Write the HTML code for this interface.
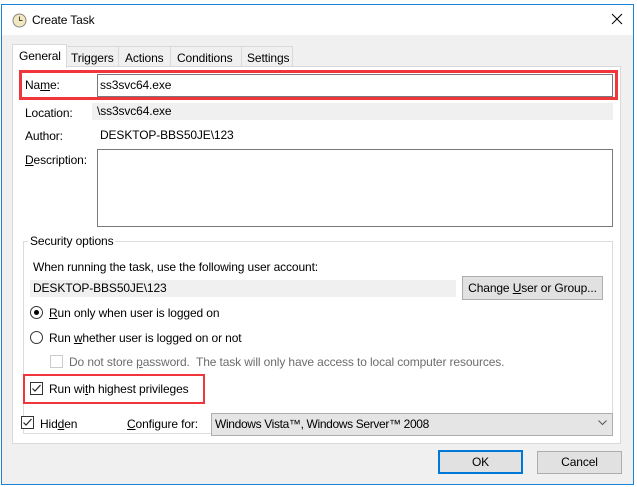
<!DOCTYPE html>
<html><head><style>
*{box-sizing:border-box;margin:0;padding:0}
body{width:637px;height:487px;background:#fff;font-family:"Liberation Sans",sans-serif;font-size:12px;color:#000;position:relative;overflow:hidden;letter-spacing:-0.12px}
.a{position:absolute;white-space:nowrap}
.t{line-height:14px}
u{text-decoration:underline}
.cb{position:absolute;width:13px;height:13px;border:1px solid #333;background:#fff}
.rd{position:absolute;width:13px;height:13px;border:1px solid #333;border-radius:50%;background:#fff}
.btn{position:absolute;background:#e1e1e1;border:1px solid #adadad;text-align:center}
</style></head><body>
<div class="a" style="left:1px;top:4px;width:633px;height:481px;border:1px solid #1883d7;background:#f0f0f0"></div>
<div class="a" style="left:2px;top:5px;width:631px;height:30px;background:#fff"></div>
<svg class="a" style="left:12px;top:13px" width="15" height="15"><circle cx="7.5" cy="7.5" r="6.5" fill="#f3e7c0" stroke="#888"/><path d="M7.5 3.5V7.5H10.5" stroke="#444" fill="none"/></svg>
<div class="a t" style="left:32px;top:13px;font-size:12px">Create Task</div>
<svg class="a" style="left:611px;top:13px" width="12" height="12"><path d="M1 1L11 11M11 1L1 11" stroke="#000" stroke-width="1"/></svg>
<div class="a" style="left:66px;top:46px;width:227px;height:21px;background:#f0f0f0;border:1px solid #d9d9d9;border-bottom:none"></div>
<div class="a" style="left:118px;top:46px;width:1px;height:21px;background:#d9d9d9"></div>
<div class="a" style="left:170px;top:46px;width:1px;height:21px;background:#d9d9d9"></div>
<div class="a" style="left:241px;top:46px;width:1px;height:21px;background:#d9d9d9"></div>
<div class="a" style="left:12px;top:66px;width:609px;height:378px;background:#fff;border:1px solid #d9d9d9"></div>
<div class="a" style="left:12px;top:44px;width:55px;height:24px;background:#fff;border:1px solid #d9d9d9;border-bottom:none"></div>
<div class="a t" style="left:19px;top:49px">General</div>
<div class="a t" style="left:71px;top:51px">Triggers</div>
<div class="a t" style="left:125px;top:51px">Actions</div>
<div class="a t" style="left:177px;top:51px">Conditions</div>
<div class="a t" style="left:247px;top:51px">Settings</div>
<div class="a" style="left:19px;top:70px;width:599px;height:30px;border:3px solid #f0363b"></div>
<div class="a t" style="left:25px;top:78px">Na<u>m</u>e:</div>
<div class="a" style="left:97px;top:74px;width:516px;height:23px;border:1px solid #7a7a7a;background:#fff"></div>
<div class="a t" style="left:100px;top:78px">ss3svc64.exe</div>
<div class="a" style="left:92px;top:103px;width:521px;height:17px;background:#f0f0f0"></div>
<div class="a t" style="left:25px;top:106px">Location:</div>
<div class="a t" style="left:97px;top:104px">\ss3svc64.exe</div>
<div class="a t" style="left:25px;top:129px">Author:</div>
<div class="a t" style="left:100px;top:128px">DESKTOP-BBS50JE\123</div>
<div class="a t" style="left:25px;top:153px"><u>D</u>escription:</div>
<div class="a" style="left:97px;top:149px;width:516px;height:78px;border:1px solid #7a7a7a;background:#fff"></div>
<div class="a" style="left:23px;top:241px;width:590px;height:193px;border:1px solid #dcdcdc"></div>
<div class="a t" style="left:28px;top:234px;background:#fff;padding:0 2px">Security options</div>
<div class="a t" style="left:33px;top:260px">When running the task, use the following user account:</div>
<div class="a" style="left:30px;top:280px;width:426px;height:17px;background:#f0f0f0"></div>
<div class="a t" style="left:33px;top:281px">DESKTOP-BBS50JE\123</div>
<div class="btn" style="left:462px;top:276px;width:141px;height:24px;line-height:22px">Change <u>U</u>ser or Group...</div>
<div class="rd" style="left:30px;top:306px"></div><div class="a" style="left:34px;top:310px;width:5px;height:5px;border-radius:50%;background:#000"></div>
<div class="a t" style="left:49px;top:306px"><u>R</u>un only when user is logged on</div>
<div class="rd" style="left:30px;top:331px"></div>
<div class="a t" style="left:49px;top:331px">Run <u>w</u>hether user is logged on or not</div>
<div class="cb" style="left:50px;top:355px;border-color:#ccc"></div>
<div class="a t" style="left:69px;top:355px;color:#6d6d6d">Do not store <u>p</u>assword.&nbsp; The task will only have access to local computer resources.</div>
<div class="a" style="left:23px;top:374px;width:182px;height:30px;border:2px solid #f0363b"></div>
<div class="cb" style="left:30px;top:382px"></div>
<svg class="a" style="left:30px;top:382px" width="13" height="13"><path d="M2.5 6.5L5 9L10.5 3" stroke="#222" fill="none" stroke-width="1.2"/></svg>
<div class="a t" style="left:49px;top:382px">Run wi<u>t</u>h highest privileges</div>
<div class="cb" style="left:21px;top:416px"></div>
<svg class="a" style="left:21px;top:416px" width="13" height="13"><path d="M2.5 6.5L5 9L10.5 3" stroke="#222" fill="none" stroke-width="1.2"/></svg>
<div class="a t" style="left:40px;top:417px">Hid<u>d</u>en</div>
<div class="a t" style="left:127px;top:417px"><u>C</u>onfigure for:</div>
<div class="a" style="left:211px;top:413px;width:402px;height:23px;background:#e5e5e5;border:1px solid #adadad"></div>
<div class="a t" style="left:215px;top:417px;letter-spacing:-0.35px">Windows Vista™, Windows Server™ 2008</div>
<svg class="a" style="left:598px;top:420px" width="9" height="6"><path d="M0.5 0.5L4.5 4.5L8.5 0.5" stroke="#555" fill="none"/></svg>
<div class="btn" style="left:438px;top:450px;width:85px;height:24px;line-height:20px;border:2px solid #0078d7">OK</div>
<div class="btn" style="left:537px;top:451px;width:85px;height:23px;line-height:21px">Cancel</div>
</body></html>
